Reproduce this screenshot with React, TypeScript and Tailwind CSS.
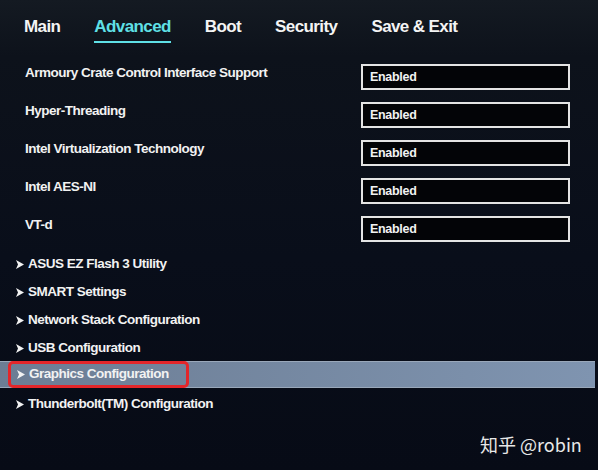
import React from 'react';

const tabs = ['Main', 'Advanced', 'Boot', 'Security', 'Save & Exit'];

const settings = [
  'Armoury Crate Control Interface Support',
  'Hyper-Threading',
  'Intel Virtualization Technology',
  'Intel AES-NI',
  'VT-d',
];

const submenus = [
  'ASUS EZ Flash 3 Utility',
  'SMART Settings',
  'Network Stack Configuration',
  'USB Configuration',
  'Graphics Configuration',
  'Thunderbolt(TM) Configuration',
];

function Arrow() {
  return (
    <svg width="8" height="9" viewBox="0 0 8 9" className="shrink-0">
      <path d="M0 0 L8 4.5 L0 9 L2 4.5 Z" fill="#f2f2f2" />
    </svg>
  );
}

export default function App() {
  return (
    <div className="relative w-[598px] h-[470px] overflow-hidden bg-[linear-gradient(180deg,#141a22_0%,#0d121b_12%,#090e1a_55%,#070b16_100%)] font-['Liberation_Sans',sans-serif] text-[#f2f2f2]">
      {/* top tabs */}
      <div className="flex gap-[34px] pl-[24px] pt-[14px] h-[50px] text-[17px] font-bold tracking-[-0.6px]">
        {tabs.map((t) => (
          <div key={t} className="flex flex-col">
            <span className={t === 'Advanced' ? 'text-[#5fe0e6]' : 'text-[#f4f4f4]'}>{t}</span>
            {t === 'Advanced' && <div className="h-[2px] bg-[#5fe0e6] mt-[1px]" />}
          </div>
        ))}
      </div>

      {/* settings with values */}
      <div className="flex flex-col gap-[12px] mt-[14px] pl-[25px] pr-[28px]">
        {settings.map((s) => (
          <div key={s} className="flex items-center justify-between h-[26px]">
            <span className="text-[13.5px] font-bold tracking-[-0.5px] pb-[8px]">{s}</span>
            <div className="w-[209px] h-[26px] border-2 border-[#e4e4e4] bg-[#030407] flex items-center pl-[7px] text-[12.5px] font-bold tracking-[-0.3px]">
              Enabled
            </div>
          </div>
        ))}
      </div>

      {/* sub menus */}
      <div className="flex flex-col mt-[8px]">
        {submenus.map((m) => {
          const active = m === 'Graphics Configuration';
          return (
            <div
              key={m}
              className={
                active
                  ? 'h-[27px] mt-[-1px] mb-[2px] w-[595px] flex items-center bg-[linear-gradient(90deg,#6c7d94,#7f94b0)] border-y border-[#9aa8ba]'
                  : 'h-[28px] flex items-center'
              }
            >
              {active ? (
                <div className="ml-[8px] w-[181px] h-[27px] border-[3px] border-[#e3262a] rounded-[5px] flex items-center gap-[4px] pl-[6px] text-[13.5px] font-bold tracking-[-0.5px]">
                  <Arrow />
                  <span>{m}</span>
                </div>
              ) : (
                <div className="flex items-center gap-[4px] pl-[16px] text-[13.5px] font-bold tracking-[-0.5px]">
                  <Arrow />
                  <span>{m}</span>
                </div>
              )}
            </div>
          );
        })}
      </div>

      {/* watermark */}
      <div className="absolute left-[480px] top-[431px] text-[18px] text-[#e8e8e8] font-['Noto_Sans_CJK_SC',sans-serif] whitespace-nowrap">
        知乎 @robin
      </div>
    </div>
  );
}
